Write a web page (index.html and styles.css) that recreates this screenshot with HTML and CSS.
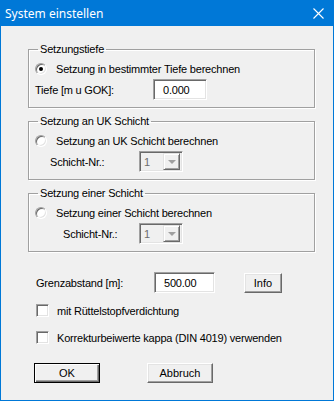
FILE: index.html
```html
<!DOCTYPE html>
<html>
<head>
<meta charset="utf-8">
<link rel="stylesheet" href="styles.css">
</head>
<body>
<div class="window">
  <div class="titlebar">
    <span class="title">System einstellen</span>
    <svg class="close" width="11" height="11" viewBox="0 0 11 11"><path d="M0.5 0.5 L10.5 10.5 M10.5 0.5 L0.5 10.5" stroke="#fff" stroke-width="1.1" fill="none"/></svg>
  </div>
  <div class="client">
    <fieldset class="group">
      <legend>Setzungstiefe</legend>
      <div class="opt"><span class="radio checked"></span><span>Setzung in bestimmter Tiefe berechnen</span></div>
      <div class="field wide"><span class="lbl">Tiefe [m u GOK]:</span><span class="edit e1">0.000</span></div>
    </fieldset>
    <fieldset class="group">
      <legend>Setzung an UK Schicht</legend>
      <div class="opt"><span class="radio"></span><span>Setzung an UK Schicht berechnen</span></div>
      <div class="field"><span class="lbl ind1">Schicht-Nr.:</span><span class="combo"><span class="cval">1</span><span class="cbtn"><span class="arrow"></span></span></span></div>
    </fieldset>
    <fieldset class="group">
      <legend>Setzung einer Schicht</legend>
      <div class="opt"><span class="radio"></span><span>Setzung einer Schicht berechnen</span></div>
      <div class="field"><span class="lbl ind2">Schicht-Nr.:</span><span class="combo"><span class="cval">1</span><span class="cbtn"><span class="arrow"></span></span></span></div>
    </fieldset>
    <div class="grenz">
      <span class="glbl">Grenzabstand [m]:</span>
      <span class="edit e2">500.00</span>
      <span class="btn info">Info</span>
    </div>
    <div class="chk c1"><span class="box"></span><span>mit Rüttelstopfverdichtung</span></div>
    <div class="chk c2"><span class="box"></span><span>Korrekturbeiwerte kappa (DIN 4019) verwenden</span></div>
    <div class="buttons">
      <span class="btn def">OK</span>
      <span class="btn cancel">Abbruch</span>
    </div>
  </div>
</div>
</body>
</html>
```
FILE: styles.css
```css
* { box-sizing: border-box; }
html, body { margin: 0; padding: 0; background: #fff; }
body {
  font-family: "Liberation Sans", Arial, sans-serif;
  font-size: 11px;
  letter-spacing: -0.2px;
  color: #000;
}
.window {
  width: 334px;
  height: 401px;
  border: 1px solid #0078d7;
  border-top: 0;
  background: #f0f0f0;
  display: flex;
  flex-direction: column;
}
.titlebar {
  height: 26px;
  flex: 0 0 26px;
  background: #0078d7;
  display: flex;
  align-items: center;
  padding-left: 4px;
}
.title {
  color: #fff;
  font-family: "Noto Sans", "Liberation Sans", sans-serif;
  font-size: 12px;
  letter-spacing: 0;
}
.close { margin-left: auto; margin-right: 9px; }
.client {
  flex: 1;
  padding: 17px 18px 0 27px;
}
.group {
  margin: 0 0 7px 0;
  padding: 6px 6px 7px 6px;
  border: 1px solid #a0a0a0;
  box-shadow: 1px 1px 0 #fff, inset 1px 1px 0 #fff;
  min-width: 0;
}
.group legend {
  padding: 0 2px;
  margin-left: 3px;
  line-height: 13px;
  height: 13px;
}
.opt {
  display: flex;
  align-items: center;
  height: 14px;
}
.radio {
  width: 12px;
  height: 12px;
  flex: 0 0 12px;
  border-radius: 50%;
  border: 1px solid;
  border-color: #a0a0a0 #fff #fff #a0a0a0;
  background: #fff;
  box-shadow: inset 1px 1px 0 #696969, inset -1px -1px 0 #e3e3e3;
  margin-right: 9px;
  position: relative;
}
.radio.checked::after {
  content: "";
  position: absolute;
  left: 3px;
  top: 3px;
  width: 4px;
  height: 4px;
  border-radius: 50%;
  background: #000;
}
.field {
  display: grid;
  grid-template-columns: 104px auto;
  align-items: center;
  height: 21px;
  margin-top: 3px;
}
.field.wide { grid-template-columns: 118px auto; }
.lbl.ind1 { padding-left: 15px; }
.lbl.ind2 { padding-left: 28px; }
.edit {
  display: flex;
  align-items: center;
  height: 21px;
  background: #fff;
  border: 1px solid;
  border-color: #a0a0a0 #fff #fff #a0a0a0;
  box-shadow: inset 1px 1px 0 #696969, inset -1px -1px 0 #e3e3e3;
  padding-left: 9px;
}
.e1 { width: 54px; }
.e2 { width: 61px; }
.combo {
  display: flex;
  align-items: center;
  width: 44px;
  height: 21px;
  background: #f0f0f0;
  border: 1px solid;
  border-color: #a0a0a0 #fff #fff #a0a0a0;
  box-shadow: inset 1px 1px 0 #696969, inset -1px -1px 0 #e3e3e3;
  padding: 2px;
}
.cval { flex: 1; color: #6d6d6d; padding-left: 2px; }
.cbtn {
  width: 17px;
  height: 17px;
  border: 1px solid;
  border-color: #e3e3e3 #696969 #696969 #e3e3e3;
  box-shadow: inset 1px 1px 0 #fff, inset -1px -1px 0 #a0a0a0;
  background: #f0f0f0;
  display: flex;
  align-items: center;
  justify-content: center;
}
.arrow {
  width: 0;
  height: 0;
  border-left: 4px solid transparent;
  border-right: 4px solid transparent;
  border-top: 4px solid #a0a0a0;
  margin-top: 1px;
}
.grenz {
  display: flex;
  align-items: center;
  height: 21px;
  margin-top: 20px;
  padding-left: 8px;
}
.glbl { width: 118px; }
.btn {
  display: flex;
  align-items: center;
  justify-content: center;
  background: #f0f0f0;
  border: 1px solid;
  border-color: #fff #696969 #696969 #fff;
  box-shadow: inset -1px -1px 0 #a0a0a0, inset 1px 1px 0 #e3e3e3;
  letter-spacing: 0;
}
.info { width: 38px; height: 20px; margin-left: 29px; }
.chk {
  display: flex;
  align-items: center;
  height: 13px;
  padding-left: 8px;
}
.c1 { margin-top: 11px; }
.c2 { margin-top: 14px; }
.box {
  width: 13px;
  height: 13px;
  flex: 0 0 13px;
  background: #fff;
  border: 1px solid;
  border-color: #a0a0a0 #fff #fff #a0a0a0;
  box-shadow: inset 1px 1px 0 #696969, inset -1px -1px 0 #e3e3e3;
  margin-right: 8px;
}
.buttons {
  display: flex;
  margin-top: 19px;
  padding-left: 6px;
}
.btn.def {
  width: 66px;
  height: 20px;
  border: 1px solid #000;
  box-shadow: inset 1px 1px 0 #fff, inset -1px -1px 0 #696969, inset -2px -2px 0 #a0a0a0;
}
.btn.cancel {
  width: 66px;
  height: 20px;
  margin-left: 47px;
}
```
